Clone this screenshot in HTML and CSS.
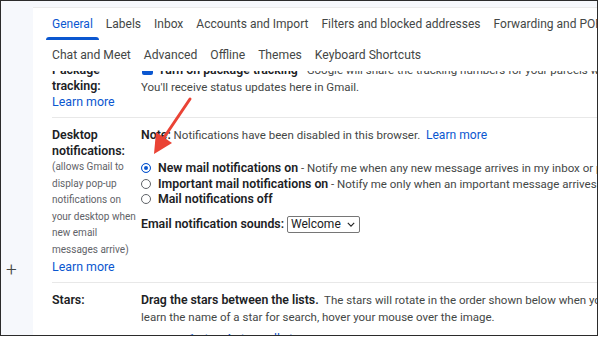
FILE: index.html
```html
<!DOCTYPE html>
<html lang="en">
<head>
    <meta charset="UTF-8">
    <title>Settings - Gmail</title>
    <link rel="stylesheet" href="styles.css">
</head>
<body>
    <div class="screen">
        <aside class="rail">
            <span class="plus">+</span>
        </aside>

        <main class="panel">
            <nav class="tabs">
                <div class="tab-row">
                    <a class="tab active">General</a>
                    <a class="tab">Labels</a>
                    <a class="tab">Inbox</a>
                    <a class="tab">Accounts and Import</a>
                    <a class="tab">Filters and blocked addresses</a>
                    <a class="tab">Forwarding and POP/IMAP</a>
                </div>
                <div class="tab-row">
                    <a class="tab">Chat and Meet</a>
                    <a class="tab">Advanced</a>
                    <a class="tab">Offline</a>
                    <a class="tab">Themes</a>
                    <a class="tab">Keyboard Shortcuts</a>
                </div>
            </nav>

            <div class="settings">
                <div class="settings-scroll">
                    <section class="setting">
                        <div class="setting-label">
                            <b>Package tracking:</b>
                            <a class="link">Learn more</a>
                        </div>
                        <div class="setting-value">
                            <div class="line"><span class="checkbox"></span><b>Turn on package tracking</b> - Google will share the tracking numbers for your parcels with carriers</div>
                            <div class="line">You'll receive status updates here in Gmail.</div>
                        </div>
                    </section>

                    <section class="setting">
                        <div class="setting-label">
                            <b>Desktop notifications:</b>
                            <small>(allows Gmail to display pop-up notifications on your desktop when new email messages arrive)</small>
                            <a class="link">Learn more</a>
                        </div>
                        <div class="setting-value">
                            <div class="line"><b>Note:</b> Notifications have been disabled in this browser. &nbsp;<a class="link">Learn more</a></div>
                            <div class="radios">
                                <label class="radio"><span class="dot checked"></span><b>New mail notifications on</b> - Notify me when any new message arrives in my inbox or primary tab</label>
                                <label class="radio"><span class="dot"></span><b>Important mail notifications on</b> - Notify me only when an important message arrives in my inbox</label>
                                <label class="radio"><span class="dot"></span><b>Mail notifications off</b></label>
                            </div>
                            <div class="sound">
                                <b>Email notification sounds:</b>
                                <span class="select">Welcome <svg viewBox="0 0 10 6"><path d="M1 1l4 4 4-4" fill="none" stroke="#222" stroke-width="1.4"/></svg></span>
                            </div>
                        </div>
                    </section>

                    <section class="setting">
                        <div class="setting-label">
                            <b>Stars:</b>
                        </div>
                        <div class="setting-value">
                            <div class="line"><b>Drag the stars between the lists.</b>&nbsp; The stars will rotate in the order shown below when you click successively. To</div>
                            <div class="line">learn the name of a star for search, hover your mouse over the image.</div>
                            <div class="line presets">Presets: &nbsp;<a class="link">1 star</a> &nbsp;<a class="link">4 stars</a> &nbsp;<a class="link">all stars</a></div>
                        </div>
                    </section>
                </div>
            </div>
        </main>

        <svg class="arrow" viewBox="0 0 60 70" width="60" height="70">
            <line x1="49" y1="3" x2="22" y2="43" stroke="#ea4335" stroke-width="3" stroke-linecap="round"/>
            <path d="M13 58 L15 36 L31 47 Z" fill="#ea4335"/>
        </svg>
    </div>
</body>
</html>
```

FILE: styles.css
```css
* {
    margin: 0;
    padding: 0;
    box-sizing: border-box;
}

body {
    background: #fff;
    font-family: Roboto, 'Liberation Sans', Arial, sans-serif;
    color: #202124;
}

.screen {
    position: relative;
    width: 598px;
    height: 336px;
    border: 1px solid #2b2b2b;
    background: #f6f8fc;
    display: flex;
    overflow: hidden;
}

.rail {
    width: 32px;
    flex-shrink: 0;
    display: flex;
    flex-direction: column;
    justify-content: flex-end;
    padding: 0 0 56px 5px;
}

.plus {
    font-size: 19px;
    font-weight: 300;
    color: #444746;
    line-height: 1;
}

.panel {
    flex: 1;
    margin-top: 6px;
    border-top: 1px solid #ebebeb;
    background: #fff;
    display: flex;
    flex-direction: column;
    min-width: 0;
}

/* tabs */
.tabs {
    padding-left: 13px;
    flex-shrink: 0;
}

.tab-row {
    display: flex;
    gap: 1px;
    white-space: nowrap;
}

.tab-row:first-child {
    height: 32px;
    padding-bottom: 1px;
}

.tab-row:last-child {
    height: 31px;
    padding-bottom: 2px;
}

.tab {
    padding: 0 6px;
    font-size: 12px;
    color: #444746;
    display: flex;
    align-items: center;
}

.tab-row:last-child .tab {
    font-size: 12.15px;
}

.tab.active {
    color: #0b57d0;
    position: relative;
}

.tab.active::after {
    content: '';
    position: absolute;
    left: 0;
    right: 0;
    bottom: -1px;
    height: 3px;
    border-radius: 3px 3px 0 0;
    background: #0b57d0;
}

/* settings list */
.settings {
    flex: 1;
    overflow: hidden;
    padding-left: 19px;
}

.settings-scroll {
    margin-top: -18px;
}

.setting {
    display: flex;
    border-bottom: 1px solid #e8e8e8;
    padding: 9px 0 7px;
    font-size: 11.5px;
    line-height: 16px;
}

.setting-label {
    width: 89px;
    flex-shrink: 0;
    display: flex;
    flex-direction: column;
}

.setting-label b {
    font-size: 12.4px;
    font-weight: 600;
    color: #202124;
}

.setting-label small {
    font-size: 10px;
    color: #5f6368;
    line-height: 16.6px;
}

.setting-label .link {
    font-size: 12.4px;
}

.setting-value {
    flex: 1;
    white-space: nowrap;
    color: #444746;
}

.setting-value b {
    font-size: 12.3px;
    font-weight: 600;
    color: #202124;
}

.line {
    height: 17px;
    line-height: 17px;
}

.presets {
    margin-top: 5px;
}

.link {
    color: #0b57d0;
}

.setting-value .link {
    font-size: 12.1px;
}

.checkbox {
    display: inline-block;
    width: 11px;
    height: 11px;
    border-radius: 2px;
    background: #0b57d0;
    margin: 0 5px 0 1px;
    vertical-align: -1px;
}

.radios {
    margin-top: 17px;
}

.radio {
    display: block;
    height: 15.5px;
    line-height: 15.5px;
}

.dot {
    display: inline-block;
    width: 10px;
    height: 10px;
    border-radius: 50%;
    border: 1px solid #5f6368;
    margin-right: 7px;
    vertical-align: -1px;
}

.dot.checked {
    border-color: #0b57d0;
    box-shadow: inset 0 0 0 2px #fff;
    background: #0b57d0;
}

.sound {
    margin-top: 8px;
    height: 17px;
    display: flex;
    align-items: center;
    gap: 3px;
}

.select {
    display: inline-flex;
    align-items: center;
    gap: 6px;
    height: 17px;
    padding: 0 4px 0 3px;
    border: 1px solid #767676;
    border-radius: 2px;
    color: #202124;
    font-size: 12px;
}

.select svg {
    width: 8px;
    height: 5px;
}

.arrow {
    position: absolute;
    left: 140px;
    top: 95px;
}
```
